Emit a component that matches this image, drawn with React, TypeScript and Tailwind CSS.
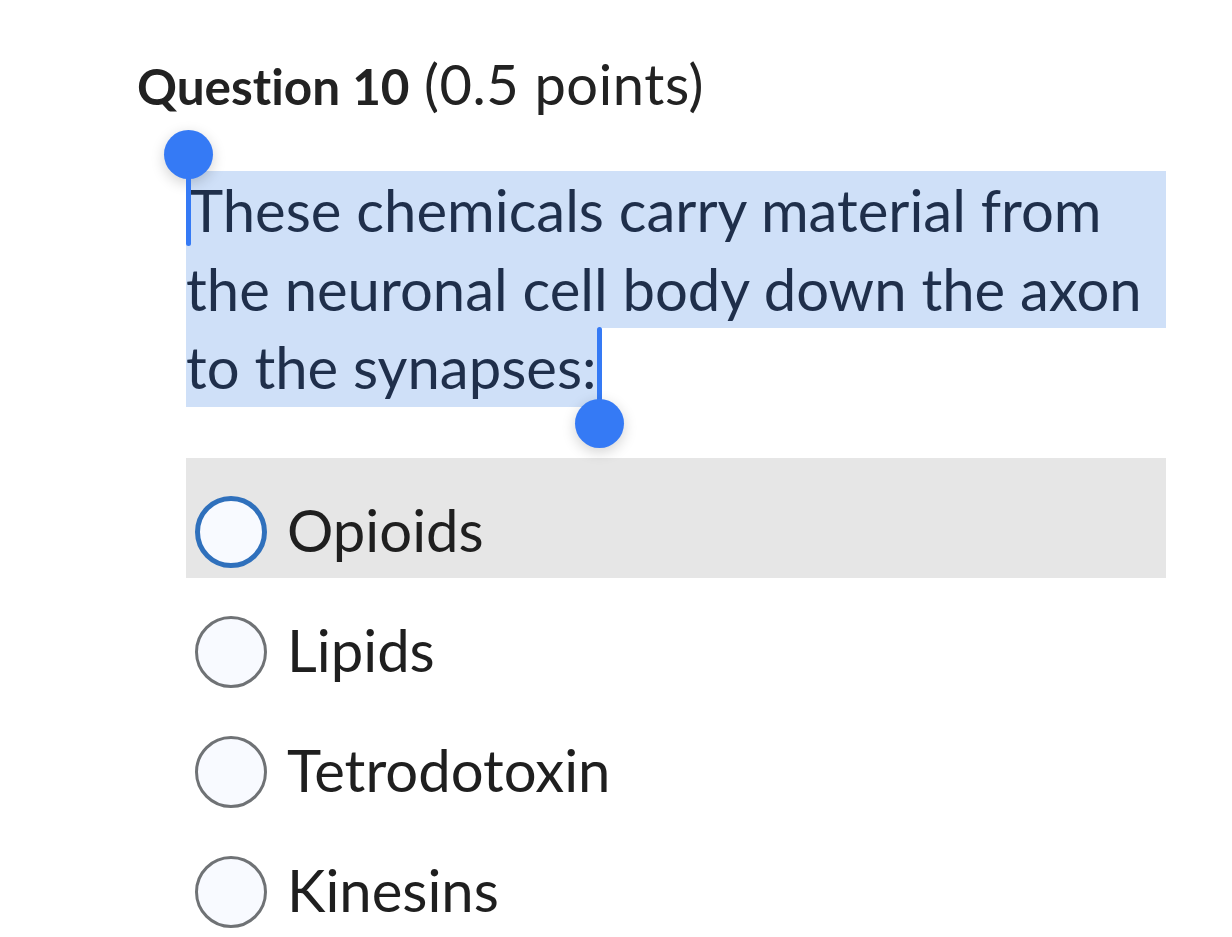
import React from "react";

const options = ["Opioids", "Lipids", "Tetrodotoxin", "Kinesins"];

export default function App() {
  return (
    <div className="w-[1232px] h-[937px] bg-white overflow-hidden relative [font-variant-ligatures:none]" style={{ fontFamily: "Lato, 'Noto Sans', sans-serif" }}>
      <div className="pt-[53px] pl-[137px] h-[115px]">
        <h2 className="text-[56px] leading-[62px] text-[#222222] whitespace-nowrap">
          <span className="font-bold text-[49.5px]">Question 10</span>{" "}
          <span className="tracking-[0.6px]">(0.5 points)</span>
        </h2>
      </div>
      <div className="ml-[186px] w-[980px] mt-[56px] relative">
        <div className="text-[58px] leading-[78.67px] text-[#1f2f4b]">
          <div className="bg-[#cfe0f8] pl-[3px]">These chemicals carry material from</div>
          <div className="bg-[#cfe0f8]">the neuronal cell body down the axon</div>
          <div>
            <span className="bg-[#cfe0f8] inline-block pr-[3px]">to the synapses:</span>
          </div>
        </div>
        {/* start handle */}
        <div className="absolute left-[-22px] top-[-41px] w-[49px] h-[49px] rounded-full bg-[#357af5] shadow-[0_4px_14px_rgba(0,0,0,0.18)]" />
        <div className="absolute left-0 top-[0px] w-[5px] h-[75px] rounded-full bg-[#357af5]" />
        {/* end handle */}
        <div className="absolute left-[411px] top-[156px] w-[5px] h-[75px] rounded-full bg-[#357af5]" />
        <div className="absolute left-[389px] top-[228px] w-[49px] h-[49px] rounded-full bg-[#357af5] shadow-[0_4px_14px_rgba(0,0,0,0.18)]" />
      </div>
      <div className="ml-[186px] w-[980px] mt-[51px] flex flex-col">
        {options.map((o, i) => (
          <div key={o} className={`h-[120px] flex items-center gap-[20px] pl-[9px] pt-[28px] ${i === 0 ? "bg-[#e6e6e6]" : ""}`}>
            <div className={`w-[72px] h-[72px] shrink-0 rounded-full bg-[#f8faff] ${i === 0 ? "border-[5px] border-[#2f70bc]" : "border-[3px] border-[#6f7275]"}`} />
            <span className="text-[58px] text-[#1f1f1f] leading-none -mt-[4px]">{o}</span>
          </div>
        ))}
      </div>
    </div>
  );
}
